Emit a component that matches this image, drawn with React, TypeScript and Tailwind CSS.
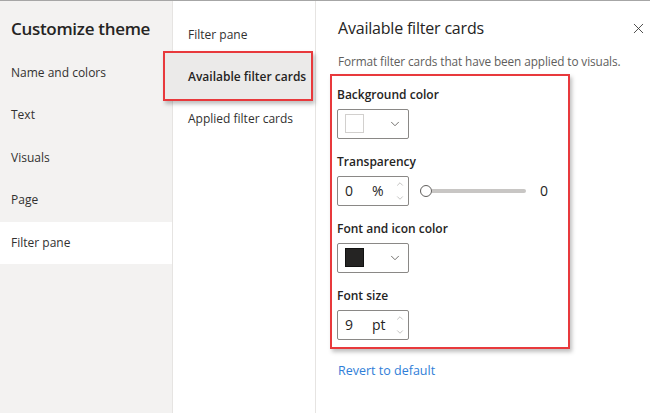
import { ChevronDown, ChevronUp, X } from "lucide-react";

const leftItems = ["Name and colors", "Text", "Visuals", "Page", "Filter pane"];

const ColorPick = ({ swatch }: { swatch: string }) => (
  <div className="flex h-[30px] w-[72px] items-center rounded-[2px] border border-[#8a8886] bg-white pl-[7px] pr-[6px]">
    <div className={`h-[19px] w-[19px] border ${swatch}`} />
    <ChevronDown className="ml-auto h-[14px] w-[14px] text-[#605e5c]" strokeWidth={1.5} />
  </div>
);

const NumInput = ({ value, unit }: { value: string; unit: string }) => (
  <div className="flex h-[30px] w-[72px] items-center rounded-[2px] border border-[#8a8886] bg-white pl-[7px] pr-[3px] text-[14px] text-[#252423]">
    <span className="w-[27px]">{value}</span>
    <span>{unit}</span>
    <div className="ml-auto flex flex-col items-center text-[#a19f9d]">
      <ChevronUp className="h-[10px] w-[10px]" strokeWidth={1.5} />
      <ChevronDown className="mt-[4px] h-[10px] w-[10px]" strokeWidth={1.5} />
    </div>
  </div>
);

const Label = ({ children }: { children: string }) => (
  <div className="mb-[5px] whitespace-nowrap text-[12px] font-semibold text-[#252423]">{children}</div>
);

const App = () => {
  return (
    <div
      className="flex h-[413px] w-[650px] overflow-hidden border-t border-[#a6a6a6] bg-white"
      style={{ fontFamily: '"Open Sans", "Noto Sans", sans-serif' }}
    >
      {/* left nav */}
      <div className="flex w-[173px] shrink-0 flex-col border-r border-[#e6e4e2] bg-[#f3f2f1]">
        <div className="whitespace-nowrap px-[11px] pt-[15px] pb-[10px] text-[17px] font-semibold tracking-[-0.3px] text-[#252423]">
          Customize theme
        </div>
        {leftItems.map((item) => (
          <div
            key={item}
            className={`flex h-[42.5px] items-center whitespace-nowrap px-[11px] text-[12px] text-[#323130] ${
              item === "Filter pane" ? "bg-white" : ""
            }`}
          >
            {item}
          </div>
        ))}
      </div>

      {/* middle nav */}
      <div className="flex w-[143px] shrink-0 flex-col border-r border-[#e6e4e2] pt-[13px]">
        <div className="flex h-[42px] items-center whitespace-nowrap px-[15px] text-[12px] text-[#323130]">Filter pane</div>
        <div className="relative flex h-[42px] items-center whitespace-nowrap px-[15px] text-[12px] font-semibold text-[#252423]">
          <div className="absolute top-[-5px] left-[-10px] h-[50px] w-[150px] border-2 border-[#e8393c] bg-[#ebeae9] shadow-[2px_3px_4px_rgba(0,0,0,0.25)]" />
          <span className="relative">Available filter cards</span>
        </div>
        <div className="flex h-[42px] items-center whitespace-nowrap px-[15px] text-[12px] text-[#323130]">Applied filter cards</div>
      </div>

      {/* right panel */}
      <div className="flex flex-1 flex-col pl-[14px] pr-[3px]">
        <div className="flex items-center pt-[15px] pl-[8px]">
          <div className="whitespace-nowrap text-[16px] tracking-[-0.2px] text-[#252423]">Available filter cards</div>
          <X className="ml-auto h-[17px] w-[17px] text-[#323130]" strokeWidth={1.2} />
        </div>
        <div className="mt-[13px] whitespace-nowrap pl-[8px] text-[11.8px] tracking-[-0.1px] text-[#605e5c]">
          Format filter cards that have been applied to visuals.
        </div>
        <div className="mt-[3px] w-[240px] border-2 border-[#e8393c] px-[5px] pt-[10px] pb-[7px] shadow-[2px_3px_4px_rgba(0,0,0,0.25)]">
          <Label>Background color</Label>
          <ColorPick swatch="border-[#d2d0ce] bg-white" />

          <div className="mt-[14px]">
            <Label>Transparency</Label>
            <div className="flex items-center">
              <NumInput value="0" unit="%" />
              <div className="ml-[11px] flex items-center">
                <div className="h-[12px] w-[12px] rounded-full border-[1.5px] border-[#605e5c] bg-white" />
                <div className="h-[4px] w-[94px] rounded-r-sm bg-[#c8c6c4]" />
              </div>
              <span className="ml-[14px] text-[14px] text-[#252423]">0</span>
            </div>
          </div>

          <div className="mt-[14px]">
            <Label>Font and icon color</Label>
            <ColorPick swatch="border-[#111] bg-[#252423]" />
          </div>

          <div className="mt-[14px]">
            <Label>Font size</Label>
            <NumInput value="9" unit="pt" />
          </div>
        </div>
        <div className="mt-[13px] pl-[8px] text-[12.5px] text-[#2f7ed8]">Revert to default</div>
      </div>
    </div>
  );
};

export default App;
